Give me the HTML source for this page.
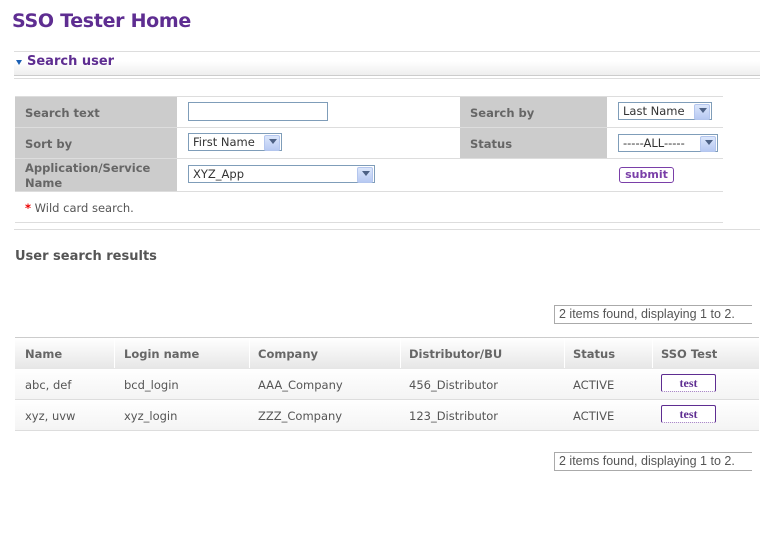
<!DOCTYPE html>
<html><head><meta charset="utf-8"><style>
*{margin:0;padding:0;box-sizing:border-box}
body{width:781px;height:535px;background:#fff;font-family:"DejaVu Sans","Liberation Sans",sans-serif;font-size:11px;color:#555;position:relative;overflow:hidden}
.a{position:absolute}
.t{white-space:nowrap}
.lbl{font-weight:bold;color:#666;font-size:11.5px}
.sel{position:absolute;border:1px solid #7f9db9;background:#fff;height:18px;font-size:11.5px;color:#333;padding:1px 4px;white-space:nowrap}
.sel:after{content:"";position:absolute;right:1px;top:1px;width:14px;height:14px;background:linear-gradient(#dbe6fb,#b7c9f2);border:1px solid #b4c6ee;border-radius:2px}
.arr{position:absolute;right:4px;top:5px;width:0;height:0;border-left:4px solid transparent;border-right:4px solid transparent;border-top:5px solid #4d6185;z-index:2}
.hl{position:absolute;height:1px;background:#ddd}
.pg{position:absolute;border:1px solid #aaa;border-right:none;height:19px;width:198px;color:#555;padding:1px 4px;white-space:nowrap;font-family:"Liberation Sans",sans-serif;font-size:12.5px}
.btn{position:absolute;border:1px solid #5e2d91;border-radius:2px;background:#fff;color:#5e2d91;font-family:"Liberation Serif",serif;font-weight:bold;font-size:12px;text-align:center;border-bottom:1px dotted #a07ac0}
.th{position:absolute;top:347px;font-weight:bold;color:#666;font-size:11.5px}
.td{position:absolute;color:#555;font-size:11.5px;white-space:nowrap}
</style></head><body>
<div class="a t" style="left:12px;top:10px;font-size:19px;font-weight:bold;color:#5e2d91;font-family:'DejaVu Sans',sans-serif;letter-spacing:-0.3px">SSO Tester Home</div>

<div class="hl" style="left:14px;top:51px;width:746px"></div>
<div class="a" style="left:14px;top:52px;width:746px;height:23px;background:linear-gradient(#fff 40%,#eee)"></div>
<div class="a" style="left:16px;top:60px;width:0;height:0;border-left:3px solid transparent;border-right:3px solid transparent;border-top:5px solid #1a5fb4"></div>
<div class="a t" style="left:27px;top:54px;font-size:13px;font-weight:bold;color:#5e2d91">Search user</div>
<div class="hl" style="left:14px;top:75px;width:746px;background:#ccc"></div>
<div class="hl" style="left:14px;top:78px;width:746px"></div>

<div class="a" style="left:15px;top:96px;width:162px;height:95px;background:#ccc"></div>
<div class="a" style="left:460px;top:96px;width:147px;height:62px;background:#ccc"></div>
<div class="hl" style="left:15px;top:96px;width:708px"></div>
<div class="hl" style="left:15px;top:127px;width:708px"></div>
<div class="hl" style="left:15px;top:158px;width:708px"></div>
<div class="hl" style="left:15px;top:191px;width:708px"></div>
<div class="hl" style="left:15px;top:222px;width:708px"></div>
<div class="hl" style="left:14px;top:229px;width:746px"></div>

<div class="a t lbl" style="left:25px;top:106px">Search text</div>
<div class="a t lbl" style="left:25px;top:137px">Sort by</div>
<div class="a lbl" style="left:25px;top:161px;line-height:15px">Application/Service<br>Name</div>
<div class="a t lbl" style="left:470px;top:106px">Search by</div>
<div class="a t lbl" style="left:470px;top:137px">Status</div>

<div class="a" style="left:188px;top:102px;width:140px;height:19px;border:1px solid #7f9db9"></div>
<div class="sel" style="left:188px;top:133px;width:94px">First Name<span class="arr"></span></div>
<div class="sel" style="left:188px;top:165px;width:187px">XYZ_App<span class="arr"></span></div>
<div class="sel" style="left:618px;top:102px;width:94px">Last Name<span class="arr"></span></div>
<div class="sel" style="left:618px;top:134px;width:100px">-----ALL-----<span class="arr"></span></div>
<div class="a t" style="left:619px;top:167px;width:55px;height:16px;border:1px solid #7a3fa8;border-radius:3px;color:#7a3fa8;font-weight:bold;font-size:11px;text-align:center;line-height:14px">submit</div>

<div class="a t" style="left:25px;top:201px;font-size:11.5px;color:#555"><span style="color:#e00;font-weight:bold">*</span> Wild card search.</div>

<div class="a t" style="left:15px;top:249px;font-size:13px;font-weight:bold;color:#555">User search results</div>

<div class="pg" style="left:554px;top:305px">2 items found, displaying 1 to 2.</div>

<div class="a" style="left:15px;top:337px;width:744px;height:32px;background:linear-gradient(#fff,#e6e6e6);border-top:1px solid #ccc"></div>
<div class="a" style="left:114px;top:338px;width:1px;height:30px;background:#fff"></div>
<div class="a" style="left:249px;top:338px;width:1px;height:30px;background:#fff"></div>
<div class="a" style="left:400px;top:338px;width:1px;height:30px;background:#fff"></div>
<div class="a" style="left:564px;top:338px;width:1px;height:30px;background:#fff"></div>
<div class="a" style="left:652px;top:338px;width:1px;height:30px;background:#fff"></div>
<div class="th" style="left:25px">Name</div>
<div class="th" style="left:124px">Login name</div>
<div class="th" style="left:258px">Company</div>
<div class="th" style="left:409px">Distributor/BU</div>
<div class="th" style="left:573px">Status</div>
<div class="th" style="left:661px">SSO Test</div>

<div class="a" style="left:15px;top:369px;width:744px;height:30px;background:linear-gradient(#fff,#f4f4f4)"></div>
<div class="hl" style="left:15px;top:399px;width:744px"></div>
<div class="a" style="left:15px;top:400px;width:744px;height:30px;background:linear-gradient(#fff,#f4f4f4)"></div>
<div class="hl" style="left:15px;top:430px;width:744px"></div>

<div class="td" style="left:25px;top:378px">abc, def</div>
<div class="td" style="left:124px;top:378px">bcd_login</div>
<div class="td" style="left:258px;top:378px">AAA_Company</div>
<div class="td" style="left:409px;top:378px">456_Distributor</div>
<div class="td" style="left:573px;top:378px">ACTIVE</div>
<div class="btn" style="left:661px;top:374px;width:55px;height:18px;line-height:16px">test</div>

<div class="td" style="left:25px;top:409px">xyz, uvw</div>
<div class="td" style="left:124px;top:409px">xyz_login</div>
<div class="td" style="left:258px;top:409px">ZZZ_Company</div>
<div class="td" style="left:409px;top:409px">123_Distributor</div>
<div class="td" style="left:573px;top:409px">ACTIVE</div>
<div class="btn" style="left:661px;top:405px;width:55px;height:18px;line-height:16px">test</div>

<div class="pg" style="left:554px;top:452px">2 items found, displaying 1 to 2.</div>
</body></html>
